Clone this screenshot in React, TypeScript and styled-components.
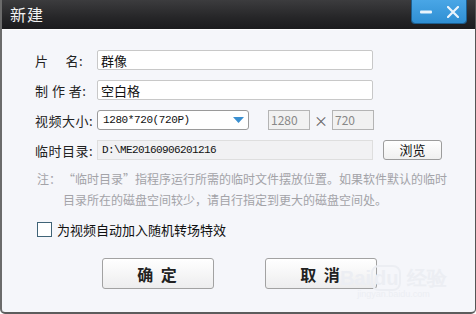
import { FC } from 'react';
import styled, { createGlobalStyle } from 'styled-components';

const GlobalStyle = createGlobalStyle`
  html, body {
    margin: 0;
    padding: 0;
    background: #ffffff;
  }
  body {
    font-family: "Noto Sans CJK SC", "Noto Sans", sans-serif;
    font-size: 13px;
    color: #222;
  }
`;

const App: FC = () => {
  return (
    <>
      <GlobalStyle />
      <Window>
        <TitleBar>
          <Title>新建</Title>
          <WinControls>
            <WinButton aria-label="最小化">
              <svg width="12" height="4" viewBox="0 0 12 4">
                <rect x="0" y="0.5" width="12" height="3" rx="1" fill="#eaf4fc" />
              </svg>
            </WinButton>
            <WinButton aria-label="关闭">
              <svg width="12" height="12" viewBox="0 0 12 12">
                <path d="M1 1 L11 11 M11 1 L1 11" stroke="#eaf4fc" strokeWidth="2.2" strokeLinecap="round" />
              </svg>
            </WinButton>
          </WinControls>
        </TitleBar>
        <Body>
          <FormRow>
            <Label>片　&nbsp;名:</Label>
            <TextInput defaultValue="群像" />
          </FormRow>
          <FormRow>
            <Label>制&nbsp;作&nbsp;者:</Label>
            <TextInput defaultValue="空白格" />
          </FormRow>
          <FormRow>
            <Label>视频大小:</Label>
            <Select>
              <span>1280*720(720P)</span>
              <svg width="11" height="6" viewBox="0 0 11 6">
                <path d="M0 0 H11 L5.5 6 Z" fill="#3a8fd0" />
              </svg>
            </Select>
            <SizeBox $offset={19}>1280</SizeBox>
            <Times>×</Times>
            <SizeBox $offset={0}>720</SizeBox>
          </FormRow>
          <FormRow>
            <Label>临时目录:</Label>
            <PathInput>D:\ME20160906201216</PathInput>
            <BrowseButton>浏览</BrowseButton>
          </FormRow>
          <Note>
            <NoteHead>注：</NoteHead>
            <NoteText>
              “临时目录”指程序运行所需的临时文件摆放位置。如果软件默认的临时
              <br />
              目录所在的磁盘空间较少，请自行指定到更大的磁盘空间处。
            </NoteText>
          </Note>
          <CheckRow>
            <CheckBox />
            <span>为视频自动加入随机转场特效</span>
          </CheckRow>
          <ActionRow>
            <ActionButton>确&nbsp;定</ActionButton>
            <ActionButton>取&nbsp;消</ActionButton>
          </ActionRow>
          <Watermark>
            <WaterLogo>Bai<span>du</span> 经验</WaterLogo>
            <WaterUrl>jingyan.baidu.com</WaterUrl>
          </Watermark>
        </Body>
      </Window>
    </>
  );
};
export default App;

const Window = styled.div`
  width: 476px;
  height: 314px;
  box-sizing: border-box;
  display: flex;
  flex-direction: column;
  background: #f5f6fa;
  border-left: 2px solid #6b6b6b;
  border-right: 1px solid #555;
  border-bottom: 2px solid #5c5c5c;
  border-radius: 0 0 5px 5px;
  overflow: hidden;
`;

const TitleBar = styled.div`
  height: 29px;
  flex: none;
  margin-left: -2px;
  margin-right: -1px;
  display: flex;
  align-items: flex-start;
  justify-content: space-between;
  background: linear-gradient(#3c3c3e, #262628 60%, #1c1c1e);
  border-bottom: 1px solid #ffffff;
`;

const Title = styled.span`
  color: #f2f2f2;
  font-size: 16px;
  line-height: 29px;
  padding-left: 10px;
  letter-spacing: 1px;
`;

const WinControls = styled.div`
  display: flex;
  margin-right: 10px;
  height: 23px;
  background: linear-gradient(#49a6e6, #2f8fd3);
  border-radius: 0 0 3px 3px;
  box-shadow: 0 0 0 1px #1c5f90;
`;

const WinButton = styled.div`
  width: 27px;
  display: flex;
  align-items: center;
  justify-content: center;
`;

const Body = styled.div`
  position: relative;
  flex: 1;
  padding: 20px 0 0 33px;
  display: flex;
  flex-direction: column;
`;

const FormRow = styled.div`
  display: flex;
  align-items: center;
  height: 20px;
  margin-bottom: 10px;
`;

const Label = styled.span`
  width: 62px;
  flex: none;
  font-size: 13px;
  color: #222;
  white-space: nowrap;
  letter-spacing: 0.5px;
`;

const TextInput = styled.input`
  width: 276px;
  height: 20px;
  box-sizing: border-box;
  border: 1px solid #c8c8c8;
  border-radius: 2px;
  background: #ffffff;
  padding: 0 3px;
  font-family: "Noto Sans CJK SC", sans-serif;
  font-size: 13px;
  color: #111;
  outline: none;
`;

const Select = styled.div`
  width: 152px;
  height: 20px;
  flex: none;
  box-sizing: border-box;
  border: 1px solid #9a9a9a;
  border-radius: 3px;
  background: #ffffff;
  display: flex;
  align-items: center;
  justify-content: space-between;
  padding: 0 4px 0 5px;
  font-family: "Liberation Mono", monospace;
  font-size: 11px;
  letter-spacing: -0.4px;
  color: #111;
`;

const SizeBox = styled.div<{ $offset: number }>`
  width: 42px;
  height: 20px;
  flex: none;
  margin-left: ${p => p.$offset}px;
  box-sizing: border-box;
  border: 1px solid #b4b4b4;
  background: #f1f1f1;
  color: #888;
  font-size: 12px;
  line-height: 18px;
  padding-left: 2px;
`;

const Times = styled.span`
  width: 22px;
  text-align: center;
  color: #666;
  font-size: 14px;
`;

const PathInput = styled.div`
  width: 276px;
  height: 20px;
  box-sizing: border-box;
  border: 1px solid #dedede;
  background: #f1f1f3;
  padding-left: 4px;
  font-family: "Liberation Mono", monospace;
  font-size: 11px;
  line-height: 18px;
  letter-spacing: -0.6px;
  color: #111;
`;

const BrowseButton = styled.div`
  margin-left: 10px;
  width: 59px;
  height: 20px;
  box-sizing: border-box;
  border: 1px solid #9c9c9c;
  border-radius: 3px;
  background: linear-gradient(#ffffff, #f0f0f0);
  font-size: 13px;
  line-height: 18px;
  text-align: center;
  color: #111;
`;

const Note = styled.div`
  display: flex;
  margin-top: -2px;
  color: #a3a3a8;
  font-size: 12px;
  line-height: 21px;
`;

const NoteHead = styled.span`
  width: 26px;
  flex: none;
  margin-left: 2px;
`;

const NoteText = styled.span`
  white-space: nowrap;
`;

const CheckRow = styled.div`
  display: flex;
  align-items: center;
  gap: 5px;
  margin-top: 10px;
  margin-left: 2px;
  font-size: 13px;
  color: #111;
`;

const CheckBox = styled.div`
  width: 15px;
  height: 15px;
  box-sizing: border-box;
  border: 1px solid #3f6377;
  background: #ffffff;
`;

const ActionRow = styled.div`
  display: flex;
  gap: 51px;
  margin-top: 19px;
  margin-left: 67px;
`;

const ActionButton = styled.div`
  width: 112px;
  height: 31px;
  box-sizing: border-box;
  border: 1px solid #a2a2a2;
  border-radius: 3px;
  background: linear-gradient(#ffffff, #ededee);
  display: flex;
  align-items: center;
  justify-content: center;
  font-size: 16px;
  font-weight: 700;
  letter-spacing: 2px;
  color: #222;
`;

const Watermark = styled.div`
  position: absolute;
  right: 28px;
  bottom: 12px;
  display: flex;
  flex-direction: column;
  align-items: center;
  color: #eceef3;
  pointer-events: none;
`;

const WaterLogo = styled.div`
  font-family: "Liberation Sans", sans-serif;
  font-size: 20px;
  font-weight: 700;
  line-height: 22px;
  & span {
    border: 2px solid #eceef3;
    border-radius: 8px;
    padding: 0 1px;
  }
`;

const WaterUrl = styled.div`
  font-family: "Liberation Sans", sans-serif;
  font-size: 9px;
  line-height: 11px;
`;
